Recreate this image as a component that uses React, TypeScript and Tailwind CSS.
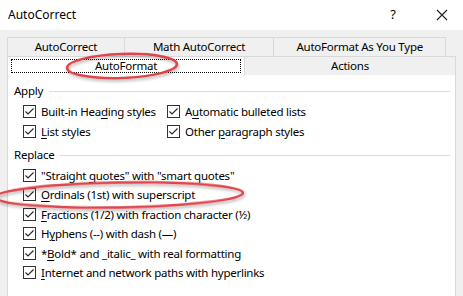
import type { ReactNode } from "react"

const FONT = "font-['Segoe_UI','Noto_Sans','Liberation_Sans',sans-serif]"

function Box() {
  return (
    <span className="w-[13px] h-[13px] shrink-0 border border-[#333] bg-white flex items-center justify-center">
      <svg width="11" height="11" viewBox="0 0 11 11">
        <polyline points="1.5,5.5 4,8 9.5,2.5" fill="none" stroke="#222" strokeWidth="1.1" />
      </svg>
    </span>
  )
}

function Check({ children, className = "" }: { children: ReactNode; className?: string }) {
  return (
    <div className={`flex items-center gap-[5px] h-[19.5px] ${className}`}>
      <Box />
      <span className="whitespace-nowrap">{children}</span>
    </div>
  )
}

function Group({ label }: { label: string }) {
  return (
    <div className="flex items-center gap-[6px] h-[16px] pr-[5px]">
      <span>{label}</span>
      <span className="flex-1 h-px bg-[#dcdcdc]" />
    </div>
  )
}

const U = ({ children }: { children: string }) => <span className="underline underline-offset-2">{children}</span>

export default function App() {
  return (
    <div className={`relative w-[463px] h-[296px] overflow-hidden bg-[#f0f0f0] text-[11.5px] tracking-[-0.25px] text-black ${FONT}`}>
      {/* Title bar */}
      <div className="h-[30px] bg-white flex items-center pl-[8px] pr-[15px] text-[12px] tracking-normal">
        <span className="flex-1">AutoCorrect</span>
        <span className="w-[20px] text-center text-[13px] mr-[33px]">?</span>
        <svg width="12" height="12" viewBox="0 0 12 12">
          <path d="M1 1L11 11M11 1L1 11" stroke="#222" strokeWidth="1.1" />
        </svg>
      </div>

      <div className="pl-[7px] pr-[7px] pt-[7px]">
        {/* Tab row 1 */}
        <div className="flex h-[19px] w-[439px] border-t border-l border-[#d9d9d9]">
          {[
            ["AutoCorrect", "w-[117px]"],
            ["Math AutoCorrect", "w-[150px]"],
            ["AutoFormat As You Type", "w-[172px]"],
          ].map(([t, w]) => (
            <div key={t} className={`${w} border-r border-[#d9d9d9] flex items-center justify-center`}>
              {t}
            </div>
          ))}
        </div>
        {/* Tab row 2 */}
        <div className="flex h-[19px] border-t border-[#d9d9d9]">
          <div className="w-[237px] bg-white border-l border-[#d9d9d9] px-[3px] py-[2px]">
            <div className="h-full border border-dotted border-black flex items-center justify-center">
              AutoFormat
            </div>
          </div>
          <div className="flex-1 border-l border-r border-[#d9d9d9] flex items-center justify-center">
            Actions
          </div>
        </div>

        {/* Panel */}
        <div className="h-[240px] bg-white border-l border-r border-[#d9d9d9] pl-[6px] pt-[8px]">
          <Group label="Apply" />
          <div className="pl-[9px] mt-[3px] grid grid-cols-[144px_1fr]">
            <Check>Built-in Hea<U>d</U>ing styles</Check>
            <Check>A<U>u</U>tomatic bulleted lists</Check>
            <Check><U>L</U>ist styles</Check>
            <Check>Other <U>p</U>aragraph styles</Check>
          </div>
          <div className="mt-[6px]">
            <Group label="Replace" />
          </div>
          <div className="pl-[9px] mt-[2.5px]">
            <Check>"Straight <U>q</U>uotes" with "smart quotes"</Check>
            <Check><U>O</U>rdinals (1st) with superscript</Check>
            <Check><U>F</U>ractions (1/2) with fraction character (½)</Check>
            <Check>H<U>y</U>phens (--) with dash (—)</Check>
            <Check>*<U>B</U>old* and _italic_ with real formatting</Check>
            <Check><U>I</U>nternet and network paths with hyperlinks</Check>
          </div>
        </div>
      </div>

      {/* Red annotation ellipses */}
      <svg className="absolute inset-0 pointer-events-none" width="463" height="296" viewBox="0 0 463 296">
        <defs>
          <filter id="sh" x="-20%" y="-50%" width="140%" height="200%">
            <feDropShadow dx="1" dy="2" stdDeviation="1.5" floodColor="#000" floodOpacity="0.3" />
          </filter>
        </defs>
        <g fill="none" stroke="#e0444c" strokeWidth="2.5" filter="url(#sh)">
          <ellipse cx="122" cy="66" rx="55" ry="12" transform="rotate(-2 122 66)" />
          <ellipse cx="119" cy="195" rx="124" ry="12.5" transform="rotate(-1 119 195)" />
        </g>
      </svg>
    </div>
  )
}
